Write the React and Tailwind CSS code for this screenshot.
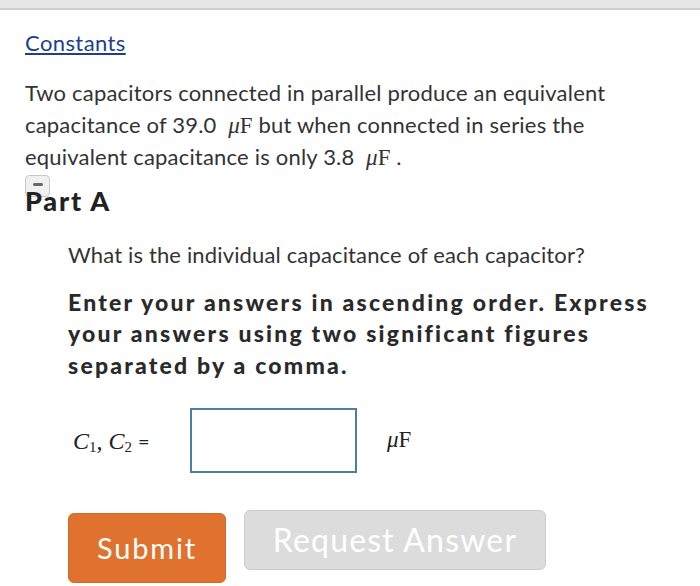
import React from "react";

// Small math helper for the μF unit
const Unit = () => (
  <span className="font-['Liberation_Serif',serif] text-[23px] tracking-normal">
    <i>μ</i>F
  </span>
);

const App = () => {
  return (
    <div className="w-[700px] h-[586px] overflow-hidden bg-white font-['Lato',sans-serif] text-[#333]">
      {/* Top bar */}
      <div className="h-[10px] bg-[#e6e6e6] border-b-2 border-[#cfcfcf]" />

      <div className="px-[25px]">
        <a href="#" className="block mt-[18px] text-[22px] leading-[30px] tracking-[0.4px] text-[#1d3f8f] underline underline-offset-2 w-fit">
          Constants
        </a>

        <p className="mt-[19px] text-[22px] leading-[31.5px] tracking-[0.2px] whitespace-nowrap">
          Two capacitors connected in parallel produce an equivalent
          <br />
          capacitance of 39.0&nbsp; <Unit /> but when connected in series the
          <br />
          equivalent capacitance is only 3.8&nbsp; <Unit /> .
        </p>

        {/* Part A heading */}
        <div className="relative mt-[11px]">
          <div className="absolute left-0 top-[-10px] w-[25px] h-[22px] rounded-[4px] border border-[#c8c8c8] bg-[#f0f0f0] flex items-center justify-center">
            <span className="w-[10px] h-[3px] bg-[#666] rounded-sm mt-[-2px]" />
          </div>
          <h2 className="relative text-[27px] leading-[32px] font-black tracking-[1.8px] text-[#222]">Part A</h2>
        </div>

        <div className="pl-[43px]">
          <p className="mt-[22px] text-[22px] leading-[31px] tracking-[0.15px] whitespace-nowrap">
            What is the individual capacitance of each capacitor?
          </p>

          <p className="mt-[17px] text-[23px] leading-[31.5px] font-black tracking-[2.2px] text-[#2a2a2a] whitespace-nowrap">
            Enter your answers in ascending order. Express
            <br />
            your answers using two significant figures
            <br />
            separated by a comma.
          </p>

          {/* Answer row */}
          <div className="mt-[27px] flex items-center">
            <span className="w-[122px] pl-[5px] font-['Liberation_Serif',serif] text-[24px] text-[#222] whitespace-nowrap">
              <i>C</i>
              <sub className="text-[15px]">1</sub>, <i>C</i>
              <sub className="text-[15px]">2</sub> <span className="font-['Lato',sans-serif] text-[20px]">=</span>
            </span>
            <div className="w-[167px] h-[65px] border-2 border-[#4d7fa3] bg-white" />
            <span className="ml-[30px] text-[#222]">
              <Unit />
            </span>
          </div>

          {/* Buttons */}
          <div className="mt-[37px] flex items-start gap-[18px]">
            <button className="mt-[3px] w-[158px] h-[70px] rounded-[6px] bg-[#e07230] text-white text-[29px] tracking-[1.8px] border border-[#d06a2a]">
              Submit
            </button>
            <button className="w-[302px] h-[60px] rounded-[6px] bg-[#dcdcdc] border border-[#cccccc] text-white text-[32px] tracking-[1.2px]">
              Request Answer
            </button>
          </div>
        </div>
      </div>
    </div>
  );
};

export default App;
